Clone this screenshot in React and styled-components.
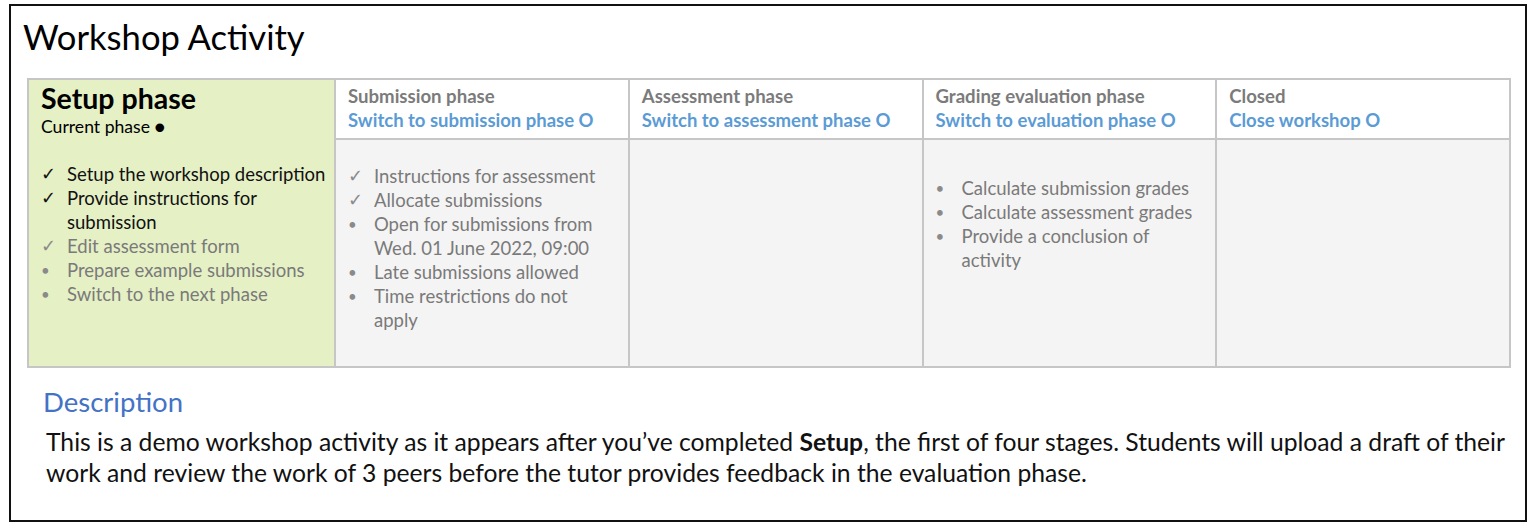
import React from "react";
import styled, { createGlobalStyle } from "styled-components";

const Global = createGlobalStyle`
  html, body { margin: 0; padding: 0; background: #ffffff; }
  body { font-family: Lato, "Open Sans", sans-serif; color: #000; }
`;

const Frame = styled.div`
  box-sizing: border-box;
  margin: 4px 9px 0 9px;
  height: 518px;
  border: 2px solid #111;
  padding: 10px 2px 0 16px;
`;

const Title = styled.h1`
  margin: 0 0 0 -4px;
  font-weight: 400;
  font-size: 34.6px;
  line-height: 41px;
`;

const Phases = styled.div`
  display: grid;
  grid-template-columns: 305px repeat(4, 1fr);
  grid-template-rows: 58px 1fr;
  gap: 2px;
  padding: 2px;
  width: 1484px;
  background: #c6c6c6;
  height: 290px;
  margin-top: 21px;
  box-sizing: border-box;
`;

const CurrentCell = styled.div`
  grid-row: 1 / span 2;
  background: #e5f0c5;
  padding: 1px 8px 0 12px;
`;

const PhaseName = styled.div`
  font-weight: 700;
  font-size: 28.5px;
  line-height: 34px;
`;

const PhaseState = styled.div`
  font-size: 17.6px;
  line-height: 24px;
`;

const HeadCell = styled.div`
  background: #ffffff;
  padding: 4px 12px 0 12px;
`;

const HeadTitle = styled.div`
  color: #7b7b7b;
  font-weight: 700;
  font-size: 18.6px;
  line-height: 24px;
`;

const HeadLink = styled.a`
  display: block;
  color: #5b9bd5;
  font-weight: 700;
  font-size: 18.5px;
  line-height: 24px;
  text-decoration: none;
`;

const BodyCell = styled.div`
  background: #f4f4f4;
  padding: ${(p) => p.$top || 24}px 18px 0 12px;
`;

const Tasks = styled.ul`
  list-style: none;
  margin: ${(p) => p.$top || 0}px 0 0 0;
  padding: 0;
`;

const Task = styled.li`
  display: flex;
  font-size: 18.5px;
  line-height: 24px;
  color: ${(p) => (p.$dark ? "#111" : "#7a7a7a")};
`;

const Marker = styled.span`
  flex: 0 0 26px;
  font-family: ${(p) => (p.$check ? '"DejaVu Sans", sans-serif' : "Lato, sans-serif")};
  font-size: ${(p) => (p.$check ? "18px" : "15px")};
  color: ${(p) => (p.$dark ? "#111" : "#8a8a8a")};
`;

const Description = styled.section`
  padding: 18px 0 0 16px;
`;

const DescTitle = styled.h2`
  margin: 0;
  color: #4472c4;
  font-weight: 400;
  font-size: 27.5px;
  line-height: 32px;
`;

const DescText = styled.p`
  margin: 8px 0 0 3px;
  max-width: 1478px;
  font-size: 24.7px;
  line-height: 31px;
  color: #111;
`;

const TaskList = ({ items, dark = 0 }) => (
  <Tasks>
    {items.map(([kind, text], i) => {
      const isDark = i < dark;
      return (
        <Task key={i} $dark={isDark}>
          <Marker $check={kind === "c"} $dark={isDark}>
            {kind === "c" ? "\u2713" : "\u2022"}
          </Marker>
          <span>{text}</span>
        </Task>
      );
    })}
  </Tasks>
);

const phases = [
  {
    title: "Submission phase",
    link: "Switch to submission phase O",
    top: 24,
    items: [
      ["c", "Instructions for assessment"],
      ["c", "Allocate submissions"],
      ["b", "Open for submissions from Wed. 01 June 2022, 09:00"],
      ["b", "Late submissions allowed"],
      ["b", "Time restrictions do not apply"],
    ],
  },
  { title: "Assessment phase", link: "Switch to assessment phase O", items: [] },
  {
    title: "Grading evaluation phase",
    link: "Switch to evaluation phase O",
    top: 36,
    items: [
      ["b", "Calculate submission grades"],
      ["b", "Calculate assessment grades"],
      ["b", "Provide a conclusion of activity"],
    ],
  },
  { title: "Closed", link: "Close workshop O", items: [] },
];

export default function App() {
  return (
    <>
      <Global />
      <Frame>
        <Title>Workshop Activity</Title>
        <Phases>
          <CurrentCell>
            <PhaseName>Setup phase</PhaseName>
            <PhaseState>Current phase ●</PhaseState>
            <Tasks $top={23} as="div">
              <TaskList
                dark={2}
                items={[
                  ["c", "Setup the workshop description"],
                  ["c", "Provide instructions for submission"],
                  ["c", "Edit assessment form"],
                  ["b", "Prepare example submissions"],
                  ["b", "Switch to the next phase"],
                ]}
              />
            </Tasks>
          </CurrentCell>
          {phases.map((p) => (
            <HeadCell key={p.title}>
              <HeadTitle>{p.title}</HeadTitle>
              <HeadLink href="#">{p.link}</HeadLink>
            </HeadCell>
          ))}
          {phases.map((p) => (
            <BodyCell key={p.title + "b"} $top={p.top}>
              <TaskList items={p.items} />
            </BodyCell>
          ))}
        </Phases>
        <Description>
          <DescTitle>Description</DescTitle>
          <DescText>
            This is a demo workshop activity as it appears after you’ve completed <b>Setup</b>, the
            first of four stages. Students will upload a draft of their work and review the work of
            3 peers before the tutor provides feedback in the evaluation phase.
          </DescText>
        </Description>
      </Frame>
    </>
  );
}
